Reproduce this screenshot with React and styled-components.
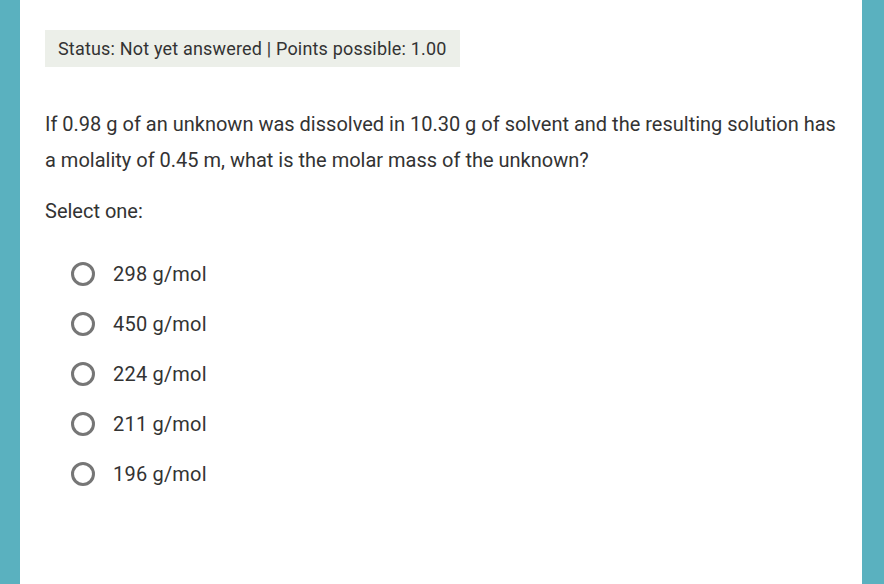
import React from 'react'
import styled, { createGlobalStyle } from 'styled-components'

const GlobalStyle = createGlobalStyle`
    html, body {
        margin: 0;
        padding: 0;
        height: 100%;
        background-color: #5ab1bf;
    }
    body {
        font-family: Roboto, "Liberation Sans", sans-serif;
        color: #333333;
    }
`;

const options = ['298 g/mol', '450 g/mol', '224 g/mol', '211 g/mol', '196 g/mol']

function App() {
    return (
        <>
            <GlobalStyle />
            <Page>
                <Panel>
                    <StatusBox>Status: Not yet answered | Points possible: 1.00</StatusBox>
                    <Question>
                        If 0.98 g of an unknown was dissolved in 10.30 g of solvent and the resulting solution has
                        a molality of 0.45 m, what is the molar mass of the unknown?
                    </Question>
                    <Prompt>Select one:</Prompt>
                    <OptionList>
                        {options.map((item) => (
                            <OptionRow key={item}>
                                <Radio />
                                <OptionLabel>{item}</OptionLabel>
                            </OptionRow>
                        ))}
                    </OptionList>
                </Panel>
            </Page>
        </>
    )
}

export default App

const Page = styled.div`
    display: flex;
    justify-content: flex-start;
    min-height: 584px;
    padding-left: 20px;
`;

const Panel = styled.div`
    width: 842px;
    box-sizing: border-box;
    background-color: #ffffff;
    padding: 30px 25px 40px;
`;

const StatusBox = styled.div`
    display: inline-block;
    background-color: #ecefe9;
    padding: 0 13px;
    height: 37px;
    line-height: 37px;
    font-size: 18px;
    letter-spacing: 0.18px;
    color: #333333;
`;

const Question = styled.p`
    margin: 39px 0 0;
    font-size: 20px;
    line-height: 36px;
    width: 800px;
`;

const Prompt = styled.p`
    margin: 15px 0 0;
    font-size: 20px;
    line-height: 36px;
`;

const OptionList = styled.div`
    display: flex;
    flex-direction: column;
    gap: 26px;
    margin-top: 33px;
    padding-left: 26px;
`;

const OptionRow = styled.label`
    display: flex;
    align-items: center;
    gap: 18px;
    height: 24px;
`;

const Radio = styled.span`
    width: 24px;
    height: 24px;
    box-sizing: border-box;
    border: 3px solid #767676;
    border-radius: 50%;
    flex-shrink: 0;
`;

const OptionLabel = styled.span`
    font-size: 20px;
    letter-spacing: 0.2px;
    color: #333333;
`;
